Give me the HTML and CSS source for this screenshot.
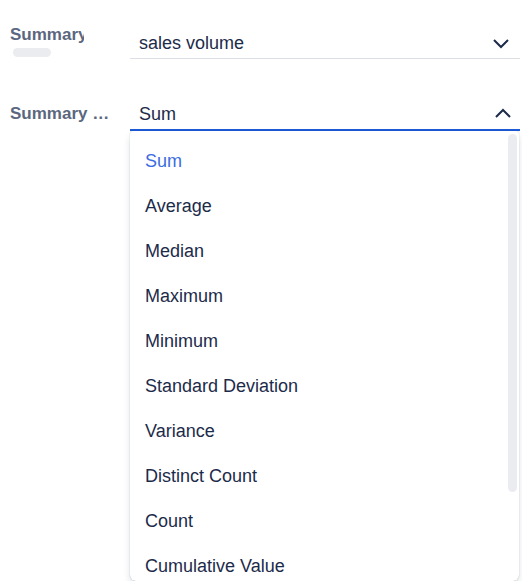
FILE: index.html
```html
<!DOCTYPE html>
<html lang="en">
<head>
<meta charset="utf-8">
<title>Summary settings</title>
<link rel="stylesheet" href="styles.css">
</head>
<body>
<div class="form">
  <div class="row row-first">
    <div class="label-col">
      <div class="label label-clip">Summary Field</div>
      <div class="skeleton"></div>
    </div>
    <div class="field">
      <div class="select">
        <span class="value">sales volume</span>
        <svg class="chevron" width="18" height="11" viewBox="0 0 18 11"><path d="M2 2l7 7 7-7" fill="none" stroke="#1c2b4a" stroke-width="2"/></svg>
      </div>
    </div>
  </div>
  <div class="row row-second">
    <div class="label-col">
      <div class="label label-ellipsis">Summary Method</div>
    </div>
    <div class="field">
      <div class="select select-open">
        <span class="value">Sum</span>
        <svg class="chevron chevron-up" width="18" height="11" viewBox="0 0 18 11"><path d="M2 9l7-7 7 7" fill="none" stroke="#1c2b4a" stroke-width="2"/></svg>
      </div>
      <div class="menu">
        <ul class="options">
          <li class="option option-selected">Sum</li>
          <li class="option">Average</li>
          <li class="option">Median</li>
          <li class="option">Maximum</li>
          <li class="option">Minimum</li>
          <li class="option">Standard Deviation</li>
          <li class="option">Variance</li>
          <li class="option">Distinct Count</li>
          <li class="option">Count</li>
          <li class="option">Cumulative Value</li>
        </ul>
        <div class="scroll-thumb"></div>
      </div>
    </div>
  </div>
</div>
</body>
</html>
```

FILE: styles.css
```css
html, body {
  margin: 0;
  padding: 0;
  background: #ffffff;
}

body {
  font-family: "Liberation Sans", Arial, sans-serif;
  color: #1c2b4a;
}

.form {
  padding-left: 10px;
  padding-right: 2px;
}

.row {
  display: flex;
  align-items: flex-start;
}

.row-first {
  margin-top: 24px;
}

.row-second {
  margin-top: 39px;
}

.label-col {
  width: 120px;
  flex: none;
  display: flex;
  flex-direction: column;
  padding-top: 1px;
}

.label {
  font-size: 17px;
  font-weight: bold;
  line-height: 20px;
  color: #5b6780;
  white-space: nowrap;
  overflow: hidden;
}

.label-clip {
  width: 74px;
}

.row-second .label-col {
  padding-top: 6px;
}

.label-ellipsis {
  width: 106px;
  text-overflow: ellipsis;
}

.skeleton {
  margin-top: 3px;
  margin-left: 3px;
  width: 38px;
  height: 9px;
  border-radius: 5px;
  background: #ebecf0;
}

.field {
  flex: 1;
  display: flex;
  flex-direction: column;
}

.select {
  display: flex;
  align-items: center;
  justify-content: space-between;
  height: 30px;
  margin-top: 4px;
  padding: 0 10px 0 9px;
  border-bottom: 1px solid #dcdfe4;
}

.row-second .select {
  margin-top: 0;
}

.select-open {
  height: 31px;
  border-bottom: 2px solid #1f5bd8;
}

.value {
  font-size: 18px;
  line-height: 30px;
  color: #1c2b4a;
}

.chevron {
  display: block;
  flex: none;
}

.chevron-up {
  margin-right: -2px;
}

.menu {
  position: relative;
  width: 389px;
  height: 450px;
  background: #ffffff;
  border-radius: 3px 3px 6px 6px;
  box-shadow: 0 4px 8px -2px rgba(9, 30, 66, 0.22), 0 0 1px rgba(9, 30, 66, 0.35);
  overflow: hidden;
}

.options {
  list-style: none;
  margin: 0;
  padding: 8px 0 0 0;
}

.option {
  height: 45px;
  line-height: 45px;
  padding-left: 15px;
  font-size: 18px;
  color: #1c2b4a;
  white-space: nowrap;
}

.option-selected {
  color: #3a6de2;
}

.scroll-thumb {
  position: absolute;
  top: 3px;
  right: 2px;
  width: 9px;
  height: 358px;
  border-radius: 5px;
  background: #ebecf0;
}
```
